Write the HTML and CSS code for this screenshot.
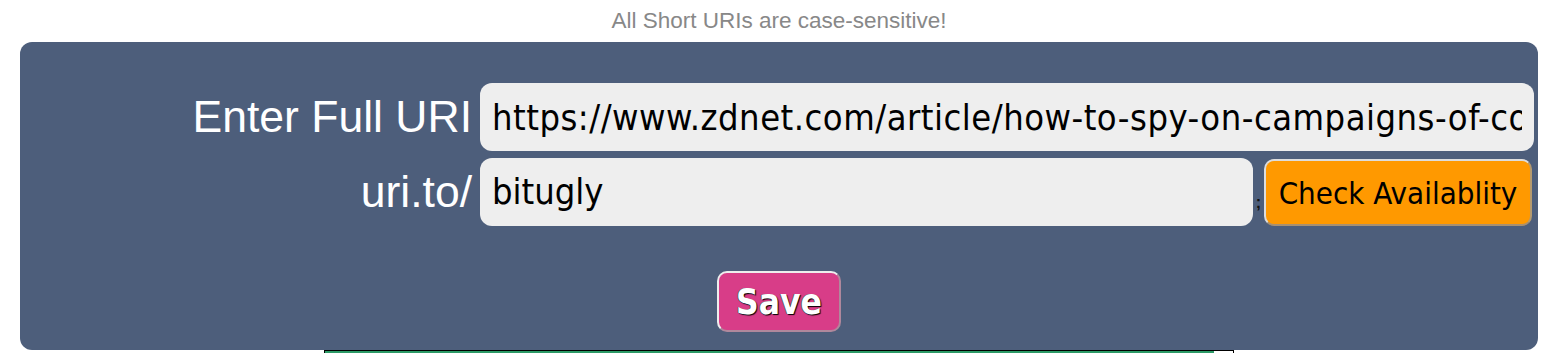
FILE: index.html
```html
<!DOCTYPE html>
<html lang="en">
<head>
	<meta charset="UTF-8">
	<title>uri.to</title>
	<link rel="stylesheet" href="styles.css">
</head>
<body>
	<!-- hint -->
	<p class="hint">All Short URIs are case-sensitive!</p>

	<!-- form -->
	<form class="panel" onsubmit="return false;">
		<div class="row">
			<label class="lbl" for="full">Enter Full URI</label>
			<input class="field field-full" id="full" type="text" value="https://www.zdnet.com/article/how-to-spy-on-campaigns-of-competitors/">
		</div>
		<div class="row">
			<label class="lbl" for="short">uri.to/</label>
			<input class="field field-short" id="short" type="text" value="bitugly">
			<span class="sep">;</span>
			<button class="btn-check" type="button">Check Availablity</button>
		</div>
		<div class="save-box">
			<button class="btn-save" type="submit">Save</button>
		</div>
	</form>

	<!-- result bar -->
	<div class="result">
		<div class="result-fill"></div>
	</div>
</body>
</html>
```

FILE: styles.css
```css
*{margin:0;padding:0;box-sizing:border-box;}
body{margin:8px;font-family:"Liberation Sans",Arial,sans-serif;background:#fff;}

/*提示*/
.hint{text-align:center;color:#888;font-size:22.5px;line-height:26px;margin-left:12px;width:1518px;}

/*表单*/
.panel{background:#4d5e7b;border-radius:12px;margin:8px 0 0 12px;width:1518px;height:308px;padding-top:41px;}
.row{display:flex;align-items:center;margin-bottom:6px;}
.lbl{width:452px;text-align:right;color:#fff;font-size:44.5px;margin-right:8px;line-height:68px;}
.field{height:68px;border:none;border-radius:12px;background:#eeeeee;color:#000;font-family:"DejaVu Sans Condensed","DejaVu Sans",Tahoma,sans-serif;font-size:36px;padding:0 12px;outline:none;}
.field-full{width:1054px;letter-spacing:0.5px;}
.field-short{width:773px;}
.sep{width:11px;text-align:center;color:#111;font-size:16px;font-weight:bold;align-self:flex-end;margin-bottom:14px;}
.btn-check{width:268px;height:67px;margin-top:2px;background:#ff9900;border:2px solid #ddd;border-right-color:#b59a6e;border-bottom-color:#a89070;border-radius:10px;font-family:"DejaVu Sans Condensed","DejaVu Sans",Tahoma,sans-serif;font-size:31px;color:#000;}

.save-box{text-align:center;margin-top:45px;}
.btn-save{width:124px;height:61px;background:#d83d88;border:2px solid #eee;border-right-color:#b0889c;border-bottom-color:#b0889c;border-radius:10px;color:#fff;font-family:"DejaVu Sans Condensed","DejaVu Sans",Tahoma,sans-serif;font-weight:bold;font-size:35px;text-shadow:1px 1px 1px #000,-1px 0 0 #555;}

/*结果*/
.result{margin-left:316px;width:910px;height:12px;border:1px solid #000;border-bottom:none;background:#fff;}
.result-fill{width:889px;height:100%;background:#2b9a66;}
```
